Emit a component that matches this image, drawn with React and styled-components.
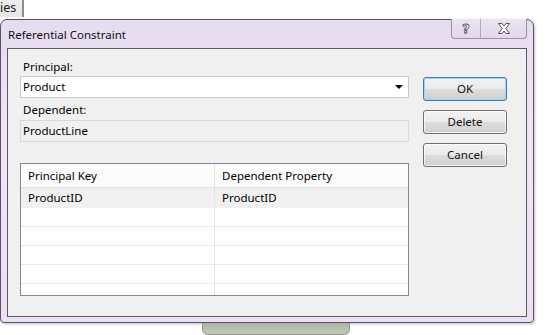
import React from "react";
import styled, { createGlobalStyle } from "styled-components";

const GlobalStyle = createGlobalStyle`
  html, body {
    margin: 0;
    background: #fff;
    overflow: hidden;
  }
  body {
    font-family: "Noto Sans", "Open Sans", sans-serif;
    font-size: 11.5px;
    color: #000;
  }
`;

const Page = styled.div`
  width: 550px;
  height: 335px;
  display: flex;
  flex-direction: column;
`;

const TopStrip = styled.div`
  height: 19px;
  display: flex;
`;

const BackTab = styled.div`
  width: 22px;
  height: 17px;
  background: linear-gradient(180deg, #efefef, #e4e4e4);
  border-right: 2px solid #8d8d8d;
  line-height: 15px;
  font-size: 12.5px;
  overflow: hidden;
  color: #222;
`;

const Dialog = styled.div`
  width: 520px;
  height: 304px;
  border: 1px solid #57525f;
  border-radius: 7px 7px 4px 4px;
  padding: 0 6px 5px 6px;
  background: linear-gradient(180deg, #e6dcef 0%, #efe5f7 40%, #eadff3 100%);
  display: flex;
  flex-direction: column;
  box-shadow: 1px 1px 3px rgba(0, 0, 0, 0.25);
`;

const TitleBar = styled.div`
  height: 28px;
  display: flex;
  align-items: flex-start;
  justify-content: space-between;
`;

const Title = styled.div`
  padding: 7px 0 0 1px;
  font-size: 11.5px;
  color: #111;
`;

const CaptionButtons = styled.div`
  display: flex;
  margin-top: -1px;
  border: 1px solid #9c92a8;
  border-top: none;
  border-radius: 0 0 4px 4px;
  background: linear-gradient(180deg, #ece3f3, #e2d7ec);
  overflow: hidden;
`;

const CaptionButton = styled.div`
  width: ${(p) => p.$w}px;
  height: 19px;
  display: flex;
  align-items: center;
  justify-content: center;
  border-left: ${(p) => (p.$first ? "none" : "1px solid #b4a9c0")};
`;

const HelpGlyph = styled.span`
  font-family: "DejaVu Sans", sans-serif;
  font-weight: bold;
  font-size: 13px;
  color: #fff;
  -webkit-text-stroke: 0.8px #4d4d55;
  line-height: 1;
`;

const Client = styled.div`
  flex: 1;
  border: 1px solid #5d5868;
  background: #f0f0f0;
  display: flex;
  gap: 14px;
  padding: 10px 0 0 12px;
`;

const LeftColumn = styled.div`
  width: 389px;
  display: flex;
  flex-direction: column;
`;

const Label = styled.div`
  height: 15px;
  line-height: 15px;
  padding-left: 3px;
  margin-bottom: ${(p) => p.$mb}px;
`;

const Field = styled.div`
  height: 20px;
  border: 1px solid ${(p) => (p.$readonly ? "#d9d9d9" : "#c9cbd0")};
  background: ${(p) => (p.$readonly ? "#f0f0f0" : "#fff")};
  display: flex;
  align-items: center;
  justify-content: space-between;
  padding: 0 5px 0 2px;
  margin-bottom: ${(p) => p.$mb || 0}px;
`;

const Arrow = styled.span`
  width: 0;
  height: 0;
  border-left: 4px solid transparent;
  border-right: 4px solid transparent;
  border-top: 4px solid #000;
  margin-top: 1px;
`;

const Grid = styled.div`
  height: 131px;
  border: 1px solid #828790;
  background: #fff;
  display: flex;
  flex-direction: column;
  overflow: hidden;
`;

const Row = styled.div`
  display: grid;
  grid-template-columns: 194px 1fr;
  height: ${(p) => p.$h}px;
  background: ${(p) => p.$bg || "#fff"};
  border-bottom: 1px solid ${(p) => p.$line || "#e8e8e8"};
  box-sizing: border-box;
  flex-shrink: 0;
`;

const Cell = styled.div`
  display: flex;
  align-items: center;
  padding-left: 7px;
  border-right: ${(p) => (p.$last ? "none" : "1px solid #e3e3e3")};
  white-space: nowrap;
`;

const RightColumn = styled.div`
  display: flex;
  flex-direction: column;
  gap: 9px;
  margin-top: 18px;
`;

const Button = styled.div`
  width: 82px;
  height: 22px;
  border: 1px solid ${(p) => (p.$focused ? "#3c7fb1" : "#707070")};
  border-radius: 3px;
  background: linear-gradient(180deg, #f2f2f2 0%, #ebebeb 48%, #dddddd 52%, #cfcfcf 100%);
  box-shadow: ${(p) =>
    p.$focused
      ? "inset 0 0 0 1px #9fd5f5"
      : "inset 0 0 0 1px rgba(255,255,255,0.7)"};
  display: flex;
  align-items: center;
  justify-content: center;
  color: #111;
`;

const BottomStrip = styled.div`
  height: 12px;
  display: flex;
  padding-left: 202px;
`;

const TaskTab = styled.div`
  width: 146px;
  height: 11px;
  background: linear-gradient(180deg, #a9b4a2, #c2cbbb);
  border: 1px solid #8f9a89;
  border-top: none;
  border-radius: 0 0 6px 6px;
`;

const CloseIcon = () => (
  <svg width="14" height="11" viewBox="0 0 14 11">
    <path
      d="M1.5 0.5 H5 L7 3 L9 0.5 H12.5 L8.8 5.5 L12.5 10.5 H9 L7 8 L5 10.5 H1.5 L5.2 5.5 Z"
      fill="#fff"
      stroke="#55535a"
      strokeWidth="1"
      strokeLinejoin="round"
    />
  </svg>
);

const emptyRows = [0, 1, 2, 3, 4];

export default function App() {
  return (
    <Page>
      <GlobalStyle />
      <TopStrip>
        <BackTab>ies</BackTab>
      </TopStrip>
      <Dialog>
        <TitleBar>
          <Title>Referential Constraint</Title>
          <CaptionButtons>
            <CaptionButton $w={28} $first>
              <HelpGlyph>?</HelpGlyph>
            </CaptionButton>
            <CaptionButton $w={45}>
              <CloseIcon />
            </CaptionButton>
          </CaptionButtons>
        </TitleBar>
        <Client>
          <LeftColumn>
            <Label $mb={2}>Principal:</Label>
            <Field $mb={4}>
              <span>Product</span>
              <Arrow />
            </Field>
            <Label $mb={3}>Dependent:</Label>
            <Field $readonly $mb={21}>
              <span>ProductLine</span>
            </Field>
            <Grid>
              <Row $h={24} $bg="#fbfbfb" $line="#e2e2e2">
                <Cell>Principal Key</Cell>
                <Cell $last>Dependent Property</Cell>
              </Row>
              <Row $h={20} $bg="#f0f0f0" $line="#f0f0f0">
                <Cell>ProductID</Cell>
                <Cell $last>ProductID</Cell>
              </Row>
              {emptyRows.map((i) => (
                <Row key={i} $h={19}>
                  <Cell />
                  <Cell $last />
                </Row>
              ))}
            </Grid>
          </LeftColumn>
          <RightColumn>
            <Button $focused>OK</Button>
            <Button>Delete</Button>
            <Button>Cancel</Button>
          </RightColumn>
        </Client>
      </Dialog>
      <BottomStrip>
        <TaskTab />
      </BottomStrip>
    </Page>
  );
}
